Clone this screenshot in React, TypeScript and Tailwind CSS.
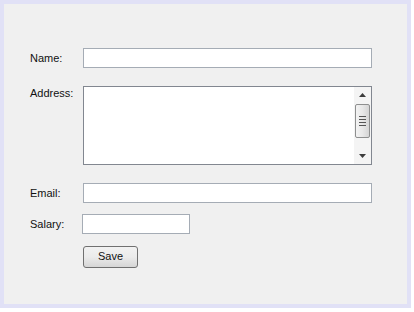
import { ChangeEvent, useState } from 'react';

const FONT = { fontFamily: '"Liberation Sans", Arial, sans-serif' };

function Field({ value, onChange, className }: { value: string; onChange: (v: string) => void; className: string }) {
  return (
    <input
      value={value}
      onChange={(e: ChangeEvent<HTMLInputElement>) => onChange(e.target.value)}
      className={`h-[20px] border border-[#a5acb5] bg-white px-1 text-[11px] outline-none ${className}`}
    />
  );
}

function ScrollBar() {
  return (
    <div className="flex h-full w-[17px] flex-col items-center bg-[#f4f4f4]">
      <div className="flex h-[16px] w-full items-center justify-center">
        <svg width="7" height="4" viewBox="0 0 7 4">
          <path d="M3.5 0 L7 4 L0 4 Z" fill="#3c3c3c" />
        </svg>
      </div>
      <div className="mt-[1px] flex h-[34px] w-[15px] flex-col items-center justify-center gap-[2px] rounded-[2px] border border-[#8e8f8f] bg-gradient-to-r from-[#f3f3f3] via-[#e8e8e8] to-[#d5d5d5]">
        <div className="h-[1px] w-[7px] bg-[#555]" />
        <div className="h-[1px] w-[7px] bg-[#555]" />
        <div className="h-[1px] w-[7px] bg-[#555]" />
        <div className="h-[1px] w-[7px] bg-[#555]" />
      </div>
      <div className="flex-1" />
      <div className="flex h-[16px] w-full items-center justify-center">
        <svg width="7" height="4" viewBox="0 0 7 4">
          <path d="M0 0 L7 0 L3.5 4 Z" fill="#3c3c3c" />
        </svg>
      </div>
    </div>
  );
}

export default function App() {
  const [name, setName] = useState('');
  const [address, setAddress] = useState('');
  const [email, setEmail] = useState('');
  const [salary, setSalary] = useState('');

  return (
    <div className="h-[312px] w-[414px] bg-white" style={FONT}>
      <div className="h-[308px] w-[411px] border-4 border-[#e1e1f6] bg-[#f0f0f0] pl-[26px] pt-[44px] text-[11px] text-[#111]">
        <div className="flex items-center">
          <span className="w-[53px]">Name:</span>
          <Field value={name} onChange={setName} className="w-[289px]" />
        </div>

        <div className="mt-[18px] flex items-start">
          <span className="-mt-[1px] w-[53px]">Address:</span>
          <div className="flex h-[79px] w-[289px] border border-[#828790] bg-white">
            <textarea
              value={address}
              onChange={e => setAddress(e.target.value)}
              className="h-full flex-1 resize-none px-1 text-[11px] outline-none"
            />
            <ScrollBar />
          </div>
        </div>

        <div className="mt-[18px] flex items-center">
          <span className="w-[53px]">Email:</span>
          <Field value={email} onChange={setEmail} className="w-[289px]" />
        </div>

        <div className="mt-[11px] flex items-center">
          <span className="w-[52px]">Salary:</span>
          <Field value={salary} onChange={setSalary} className="w-[108px]" />
        </div>

        <div className="mt-[12px] flex">
          <div className="w-[53px]" />
          <button
            type="button"
            className="h-[22px] w-[55px] rounded-[3px] border border-[#707070] bg-gradient-to-b from-[#f2f2f2] via-[#ebebeb] to-[#d6d6d6] pb-[1px] text-[11px] text-[#111]"
          >
            Save
          </button>
        </div>
      </div>
    </div>
  );
}
